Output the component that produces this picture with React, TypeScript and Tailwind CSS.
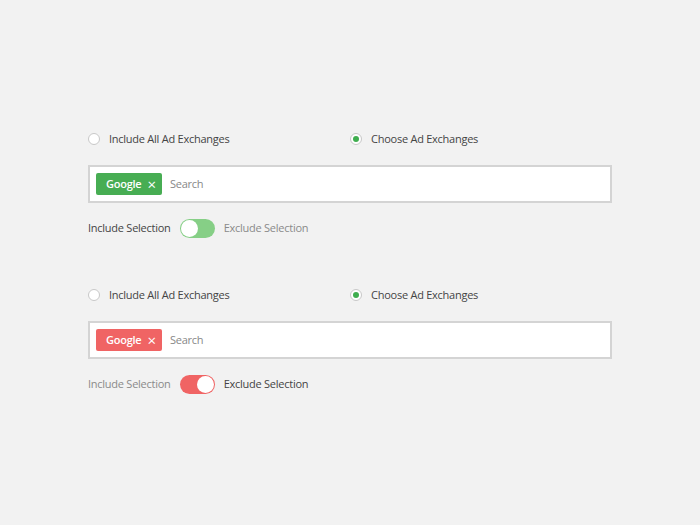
import React, { useState } from 'react'

type Mode = 'include' | 'exclude'

function Radio({ checked, label }: { checked: boolean; label: string }) {
  return (
    <label className="flex items-center h-5 cursor-pointer">
      <span className="w-3 h-3 rounded-full border border-[#c8c8c8] bg-white flex items-center justify-center shrink-0">
        {checked && <span className="w-[6px] h-[6px] rounded-full bg-[#3fae4f]" />}
      </span>
      <span className="ml-[9px] text-[#444]">{label}</span>
    </label>
  )
}

function Group({ initial }: { initial: Mode }) {
  const [mode, setMode] = useState<Mode>(initial)
  const exclude = mode === 'exclude'

  return (
    <div className="flex flex-col">
      {/* Exchange choice */}
      <div className="grid grid-cols-2">
        <Radio checked={false} label="Include All Ad Exchanges" />
        <Radio checked={true} label="Choose Ad Exchanges" />
      </div>

      {/* Tag search box */}
      <div className="mt-4 h-[38px] border-2 border-[#d4d4d4] bg-white flex items-center px-[6px]">
        <span
          className={
            'h-[22px] w-[66px] rounded-[2px] flex items-center pl-[10px] text-white font-semibold ' +
            (exclude ? 'bg-[#f06464]' : 'bg-[#47ad53]')
          }
        >
          Google
          <span className="ml-[6px] text-[15px] font-normal leading-none">×</span>
        </span>
        <input
          placeholder="Search"
          className="ml-2 flex-1 bg-transparent outline-none text-[#444] placeholder-[#888]"
        />
      </div>

      {/* Include / exclude switch */}
      <div className="mt-4 flex items-center h-[19px]">
        <span className={exclude ? 'text-[#8a8a8a]' : 'text-[#444]'}>Include Selection</span>
        <button
          onClick={() => setMode(exclude ? 'include' : 'exclude')}
          className={
            'ml-[9px] w-[35px] h-[19px] rounded-full flex items-center px-[1px] ' +
            (exclude ? 'bg-[#f06464] justify-end' : 'bg-[#86cf86] justify-start')
          }
        >
          <span className="w-[17px] h-[17px] rounded-full bg-white" />
        </button>
        <span className={'ml-[9px] ' + (exclude ? 'text-[#444]' : 'text-[#8a8a8a]')}>Exclude Selection</span>
      </div>
    </div>
  )
}

export default function App() {
  return (
    <div
      className="min-h-screen bg-[#f2f2f2] flex justify-center pt-[129px] text-[11px] tracking-[-0.25px]"
      style={{ fontFamily: '"Open Sans", "Noto Sans", sans-serif' }}
    >
      <div className="w-[524px] flex flex-col gap-[47px]">
        <Group initial="include" />
        <Group initial="exclude" />
      </div>
    </div>
  )
}
